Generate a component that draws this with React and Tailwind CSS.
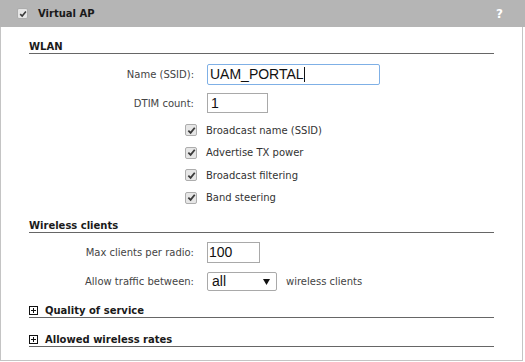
function Check({ size = 12 }) {
  return (
    <span
      className="flex shrink-0 items-center justify-center rounded-[2px] border border-[#adadad] bg-[#e6e6e6]"
      style={{ width: size, height: size }}
    >
      <svg width={size - 3} height={size - 3} viewBox="0 0 10 10">
        <path d="M1.5 5.2 L4 7.6 L8.6 2" fill="none" stroke="#3a3a3a" strokeWidth="2" />
      </svg>
    </span>
  )
}

function Heading({ children, plus }) {
  return (
    <div className="flex h-[15px] items-end gap-[7px] border-b border-[#666] text-[10px] font-bold leading-[13px] text-[#1a1a1a]">
      {plus && (
        <span className="mb-[2px] flex h-[9px] w-[9px] items-center justify-center border border-[#111]">
          <svg width="7" height="7" viewBox="0 0 7 7">
            <path d="M3.5 1 V6 M1 3.5 H6" stroke="#111" strokeWidth="1" />
          </svg>
        </span>
      )}
      <span>{children}</span>
    </div>
  )
}

function Row({ label, children, className = '' }) {
  return (
    <div className={`flex items-center ${className}`}>
      <div className="w-[166px] pr-[1px] text-right text-[10px] text-[#444]">{label}</div>
      <div className="ml-[12px] flex items-center">{children}</div>
    </div>
  )
}

function CheckRow({ label }) {
  return (
    <div className="flex h-[22.5px] items-center pl-[156px]">
      <Check />
      <span className="ml-[9px] text-[10px] text-[#333]">{label}</span>
    </div>
  )
}

function Field({ value, width, className = '', children }) {
  return (
    <div
      className={`flex items-center border font-['Liberation_Sans',sans-serif] text-[14px] text-[#111] ${className}`}
      style={{ width }}
    >
      {value}
      {children}
    </div>
  )
}

export default function App() {
  return (
    <div className="h-[362px] w-[525px] overflow-hidden bg-white font-['DejaVu_Sans',sans-serif]">
      <header className="flex h-[27px] items-center bg-[#b5b5b5] pl-[17px] pr-[22px]">
        <Check size={11} />
        <span className="ml-[10px] text-[10px] font-bold text-[#1a1a1a]">Virtual AP</span>
        <span className="ml-auto text-[12px] font-bold text-white">?</span>
      </header>

      <div className="w-[523px] border-x border-b border-[#c4c4c4] px-[28px] pt-[12px] pb-[13px]">
        <Heading>WLAN</Heading>

        <Row label="Name (SSID):" className="mt-[10px] h-[21px]">
          <Field width={173} className="h-[21px] rounded-[2px] border-[#7fb0e6] pl-[2px]">
            <span>UAM_PORTAL</span>
            <span className="h-[15px] w-[1px] bg-[#111]" />
          </Field>
        </Row>

        <Row label="DTIM count:" className="mt-[8px] h-[20px]">
          <Field width={61} value="1" className="h-[20px] border-[#a9a9a9] pl-[3px]" />
        </Row>

        <div className="mt-[6px]">
          <CheckRow label="Broadcast name (SSID)" />
          <CheckRow label="Advertise TX power" />
          <CheckRow label="Broadcast filtering" />
          <CheckRow label="Band steering" />
        </div>

        <div className="mt-[9px]">
          <Heading>Wireless clients</Heading>
        </div>

        <Row label="Max clients per radio:" className="mt-[9px] h-[21px]">
          <Field width={53} value="100" className="h-[21px] border-[#a9a9a9] pl-[1px]" />
        </Row>

        <Row label="Allow traffic between:" className="mt-[9px] h-[19px]">
          <div className="flex h-[19px] w-[70px] items-center justify-between rounded-[2px] border border-[#a9a9a9] pl-[4px] pr-[6px] font-['Liberation_Sans',sans-serif] text-[14px] text-[#111]">
            <span>all</span>
            <svg width="7" height="6" viewBox="0 0 7 6">
              <path d="M0 0 H7 L3.5 6 Z" fill="#111" />
            </svg>
          </div>
          <span className="ml-[9px] text-[10px] text-[#444]">wireless clients</span>
        </Row>

        <div className="mt-[12px]">
          <Heading plus>Quality of service</Heading>
        </div>
        <div className="mt-[14px]">
          <Heading plus>Allowed wireless rates</Heading>
        </div>
      </div>
    </div>
  )
}
